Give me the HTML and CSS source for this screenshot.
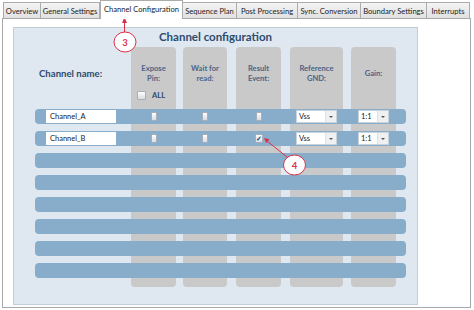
FILE: index.html
```html
<!DOCTYPE html>
<html lang="en">
<head>
  <meta charset="UTF-8">
  <title>Channel Configuration</title>
  <link rel="stylesheet" href="styles.css">
</head>
<body>
  <nav class="tabs">
    <div class="tab t-overview">Overview</div>
    <div class="tab t-general">General Settings</div>
    <div class="tab t-channel active">Channel Configuration</div>
    <div class="tab t-sequence">Sequence Plan</div>
    <div class="tab t-post">Post Processing</div>
    <div class="tab t-sync">Sync. Conversion</div>
    <div class="tab t-boundary">Boundary Settings</div>
    <div class="tab t-interrupts">Interrupts</div>
  </nav>

  <div class="page">
    <div class="panel">
      <h2 class="title">Channel configuration</h2>
      <div class="table">
        <div class="cols">
          <div class="col c-exp">
            <div class="head">Expose<br>Pin:</div>
            <div class="all"><span class="cb cb-all"></span>ALL</div>
          </div>
          <div class="col c-wait"><div class="head">Wait for<br>read:</div></div>
          <div class="col c-res"><div class="head">Result<br>Event:</div></div>
          <div class="col c-ref"><div class="head">Reference<br>GND:</div></div>
          <div class="col c-gain"><div class="head">Gain:</div></div>
        </div>

        <div class="rows">
          <div class="name-label">Channel name:</div>
          <div class="row">
            <div class="name">Channel_A</div>
            <span class="cb c-exp"></span>
            <span class="cb c-wait"></span>
            <span class="cb c-res"></span>
            <div class="sel c-ref"><span class="sel-val">Vss</span><span class="sel-btn"></span></div>
            <div class="sel c-gain"><span class="sel-val">1:1</span><span class="sel-btn"></span></div>
          </div>
          <div class="row">
            <div class="name">Channel_B</div>
            <span class="cb c-exp"></span>
            <span class="cb c-wait"></span>
            <span class="cb c-res checked">&#10003;</span>
            <div class="sel c-ref"><span class="sel-val">Vss</span><span class="sel-btn"></span></div>
            <div class="sel c-gain"><span class="sel-val">1:1</span><span class="sel-btn"></span></div>
          </div>
          <div class="row"></div>
          <div class="row"></div>
          <div class="row"></div>
          <div class="row"></div>
          <div class="row"></div>
          <div class="row"></div>
        </div>
      </div>
    </div>
  </div>

  <!-- callouts drawn over the screenshot -->
  <svg class="marks" width="474" height="310" viewBox="0 0 474 310">
    <g stroke="#d8324a" fill="#d8324a">
      <line x1="124.5" y1="32" x2="124.5" y2="22" stroke-width="1"/>
      <polygon points="124.5,17 122,23 127,23" stroke="none"/>
      <line x1="287" y1="157" x2="267" y2="141" stroke-width="1"/>
      <polygon points="264,138 269.5,139.3 266.3,143.1" stroke="none"/>
    </g>
    <ellipse cx="125" cy="42" rx="11" ry="10" fill="#fff" stroke="#d8324a" stroke-width="1"/>
    <text x="125" y="45.5" class="mark-num">3</text>
    <ellipse cx="294.5" cy="165" rx="11" ry="10" fill="#fff" stroke="#d8324a" stroke-width="1"/>
    <text x="294.5" y="168.5" class="mark-num">4</text>
  </svg>
</body>
</html>
```

FILE: styles.css
```css
:root {
  --cols: 96px 45px 7px 44px 9px 45px 9px 53px 8px 45px 10px;
  --panel: #dfe8f1;
  --column: #c9c9c9;
  --bar: #88adca;
  --ink: #2d4b6d;
  --head: #4b6486;
}
body {
  margin: 0;
  width: 474px; height: 310px;
  position: relative; overflow: hidden;
  background: #fff;
  font-family: Lato, "Open Sans", sans-serif;
}

/* tab strip */
.tabs {
  display: flex; align-items: flex-end;
  height: 18px; padding-left: 3px;
}
.tab {
  box-sizing: border-box; height: 16px;
  border: 1px solid #acacac; border-left: none; border-bottom: none;
  background: linear-gradient(#f4f4f4, #e1e1e1);
  color: #222; font-size: 7.6px;
  display: flex; align-items: center; justify-content: center;
}
.t-overview { width: 38px; border-left: 1px solid #acacac; }
.t-general { width: 59px; }
.t-channel { width: 83px; }
.t-sequence { width: 54px; }
.t-post { width: 61px; }
.t-sync { width: 63px; }
.t-boundary { width: 66px; }
.t-interrupts { width: 43px; }
.tab.active {
  height: 19px; margin-bottom: -1px;
  border-left: 1px solid #acacac;
  background: #fff;
  padding-bottom: 3px;
  position: relative; z-index: 1;
}

/* page + panel */
.page {
  box-sizing: border-box;
  width: 469px; height: 290px; margin-left: 2px;
  border: 1px solid #a9a9a9;
  padding: 8px 0 0 10px;
}
.panel {
  box-sizing: border-box;
  width: 405px; height: 278px;
  border: 1px solid #c4ccd5;
  background: var(--panel);
}
.title {
  margin: 0; padding-top: 2px;
  font-size: 11.5px; line-height: 14px; font-weight: 700;
  color: var(--ink); text-align: center;
}

/* table: grey columns under blue rows */
.table { display: grid; margin: 3px 0 0 21px; width: 371px; }
.cols, .rows { grid-area: 1 / 1; }
.cols {
  display: grid; grid-template-columns: var(--cols);
  height: 240px;
}
.col { grid-row: 1; background: var(--column); border-radius: 4px; }
.c-exp { grid-column: 2; }
.c-wait { grid-column: 4; }
.c-res { grid-column: 6; }
.c-ref { grid-column: 8; }
.c-gain { grid-column: 10; }

.head {
  height: 20px; margin-top: 16px;
  display: flex; align-items: center; justify-content: center;
  text-align: center;
  font-size: 7.6px; line-height: 10px; font-weight: 700;
  color: var(--head);
}
.all {
  display: flex; align-items: center; gap: 6px;
  margin-top: 7px; padding-left: 6px;
  font-size: 7.6px; font-weight: 700; color: var(--ink);
}

.rows { display: flex; flex-direction: column; gap: 7px; }
.name-label {
  height: 55px; width: 96px; box-sizing: border-box;
  display: flex; align-items: center; padding: 0 0 2px 4px;
  font-size: 9.6px; font-weight: 700; color: var(--ink);
}
.row {
  height: 15px;
  display: grid; grid-template-columns: var(--cols); align-items: center;
  background: var(--bar); border-radius: 4px;
}
.name {
  grid-column: 1;
  margin-left: 11px; width: 70px; height: 13px; box-sizing: border-box;
  padding-left: 4px; background: #fff;
  font-size: 7.5px; line-height: 13px; color: #222;
}

.cb {
  box-sizing: border-box; width: 6px; height: 9px;
  border: 1px solid #a7afb8; border-radius: 1px;
  background: linear-gradient(#fdfdfd, #d9dde1);
  justify-self: center;
}
.cb-all { width: 9px; height: 9px; }
.cb.checked {
  width: 8px;
  font-size: 7px; line-height: 7px; text-align: center;
  color: #1f3f8a; font-weight: 700;
}

.sel {
  justify-self: start;
  display: flex; height: 13px; box-sizing: border-box;
  background: #fff; border: 1px solid #c9d3dc;
  font-size: 7.5px; line-height: 11px; color: #222;
}
.sel.c-ref { margin-left: 6px; width: 41px; }
.sel.c-gain { margin-left: 7px; width: 31px; }
.sel-val { flex: 1; padding-left: 2px; }
.sel-btn {
  width: 10px;
  background: #eef0f2; border-left: 1px solid #dde2e7;
  display: flex; align-items: center; justify-content: center;
}
.sel-btn::after {
  content: ""; border: 2px solid transparent; border-top: 2px solid #555; margin-top: 2px;
}

/* callouts */
.marks { position: absolute; top: 0; left: 0; pointer-events: none; }
.mark-num {
  font-family: Lato, sans-serif; font-size: 9.5px; font-weight: 700;
  fill: #d8324a; text-anchor: middle;
}
```
